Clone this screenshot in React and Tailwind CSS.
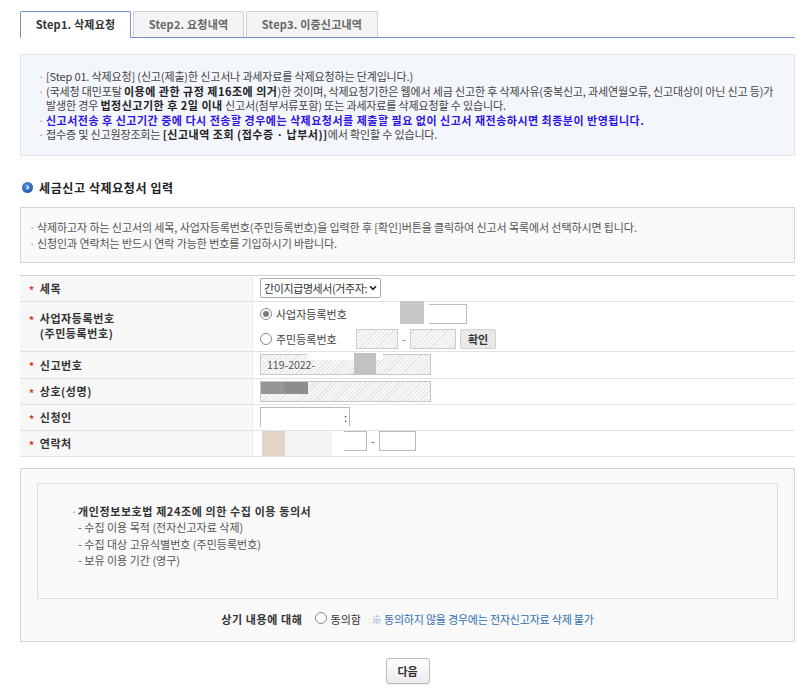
import React from 'react';

const Star = () => <span className="text-[#d32f2f] text-[10px] mr-[5px] relative top-[1px]">*</span>;

const Radio = ({ checked }) => (
  <span className="inline-flex items-center justify-center w-[12px] h-[12px] rounded-full border border-[#8a8a8a] bg-white mr-[4px]">
    {checked && <span className="w-[6px] h-[6px] rounded-full bg-[#7a7a7a]" />}
  </span>
);

const Row = ({ label, h, children }) => (
  <div className="flex border-b border-[#e2e2e2]" style={{ height: h }}>
    <div className="w-[233px] bg-[#f7f7f7] flex items-center pl-[9px] font-bold text-[11px] text-[#333] tracking-[0.6px] border-r border-[#ececec]">
      {label}
    </div>
    <div className="flex-1 relative flex items-center pl-[7px]">{children}</div>
  </div>
);

export default function App() {
  return (
    <div className="min-h-screen bg-white font-['Noto_Sans_CJK_KR',sans-serif] text-[#444] text-[11px]">
      <div className="w-[775px] ml-[20px] pt-[11px] pb-[12px]">
        {/* tabs */}
        <div className="flex items-end gap-[2px] border-b border-[#6f91c7] h-[27px]">
          <div className="w-[111px] h-[27px] -mb-px bg-white border border-[#6f91c7] border-b-white rounded-t-[2px] flex items-center justify-center font-bold text-[11px] text-[#333] tracking-[0.2px]">
            Step1. 삭제요청
          </div>
          <div className="w-[111px] h-[26px] bg-[#f4f4f4] border border-[#cfcfcf] border-b-0 rounded-t-[2px] flex items-center justify-center font-bold text-[11px] text-[#666] tracking-[0.2px]">
            Step2. 요청내역
          </div>
          <div className="w-[132px] h-[26px] bg-[#f4f4f4] border border-[#cfcfcf] border-b-0 rounded-t-[2px] flex items-center justify-center font-bold text-[11px] text-[#666] tracking-[0.2px]">
            Step3. 이중신고내역
          </div>
        </div>

        {/* info box */}
        <div className="mt-[16px] bg-[#f3f6fb] border border-[#e1e5eb] pt-[14px] pb-[13px] pl-[17px] text-[11px] leading-[14.6px] tracking-[-0.15px] text-[#444]">
          <div className="flex"><span className="w-[8px] text-[#999]">·</span><span>[Step 01. 삭제요청] (신고(제출)한 신고서나 과세자료를 삭제요청하는 단계입니다.)</span></div>
          <div className="flex">
            <span className="w-[8px] text-[#999]">·</span>
            <span>
              (국세청 대민포탈 <b className="text-[#222] tracking-[0.5px]">이용에 관한 규정 제16조에 의거</b>)한 것이며, 삭제요청기한은 웹에서 세금 신고한 후 삭제사유(중복신고, 과세연월오류, 신고대상이 아닌 신고 등)가
              <br />
              발생한 경우 <b className="text-[#222] tracking-[0.5px]">법정신고기한 후 2일 이내</b> 신고서(첨부서류포함) 또는 과세자료를 삭제요청할 수 있습니다.
            </span>
          </div>
          <div className="flex"><span className="w-[8px] text-[#999]">·</span><b className="text-[#2d14e6] tracking-[0.5px]">신고서전송 후 신고기간 중에 다시 전송할 경우에는 삭제요청서를 제출할 필요 없이 신고서 재전송하시면 최종분이 반영됩니다.</b></div>
          <div className="flex"><span className="w-[8px] text-[#999]">·</span><span>접수증 및 신고원장조회는 <b className="text-[#222] tracking-[0.5px]">[신고내역 조회 (접수증 · 납부서)]</b>에서 확인할 수 있습니다.</span></div>
        </div>

        {/* heading */}
        <div className="mt-[23px] flex items-center gap-[6px] pl-[2px]">
          <svg width="11" height="11" viewBox="0 0 11 11">
            <defs>
              <radialGradient id="g" cx="40%" cy="35%" r="70%">
                <stop offset="0%" stopColor="#4f8fdc" />
                <stop offset="100%" stopColor="#1d5aa8" />
              </radialGradient>
            </defs>
            <circle cx="5.5" cy="5.5" r="5.5" fill="url(#g)" />
            <path d="M4.6 3.6 L6.6 5.5 L4.6 7.4" stroke="#fff" strokeWidth="1.3" fill="none" />
          </svg>
          <span className="font-bold text-[12px] text-[#222] tracking-[0.6px]">세금신고 삭제요청서 입력</span>
        </div>

        {/* guide box */}
        <div className="mt-[10px] bg-[#f9f9f9] border border-[#d6d6d6] py-[11px] pl-[8px] text-[11px] leading-[16px] tracking-[-0.1px] text-[#555]">
          <div className="flex"><span className="w-[8px] text-[#999]">·</span><span>삭제하고자 하는 신고서의 세목, 사업자등록번호(주민등록번호)을 입력한 후 [확인]버튼을 클릭하여 신고서 목록에서 선택하시면 됩니다.</span></div>
          <div className="flex"><span className="w-[8px] text-[#999]">·</span><span>신청인과 연락처는 반드시 연락 가능한 번호를 기입하시기 바랍니다.</span></div>
        </div>

        {/* form table */}
        <div className="mt-[12px] border-t border-[#d4d4d4]">
          <Row h={26} label={<><Star />세목</>}>
            <div className="w-[121px] h-[20px] border border-[#a9a9a9] rounded-[2px] flex items-center justify-between pl-[3px] pr-[3px] text-[11px] text-[#333] tracking-[-0.4px]">
              <span>간이지급명세서(거주자:</span>
              <svg width="8" height="6" viewBox="0 0 8 6"><path d="M1 1.2 L4 4.4 L7 1.2" stroke="#222" strokeWidth="1.6" fill="none" /></svg>
            </div>
          </Row>
          <Row h={50} label={<div className="flex"><Star /><div className="leading-[15px]">사업자등록번호<br />(주민등록번호)</div></div>}>
            <div className="flex flex-col gap-[5px]">
              <div className="flex items-center h-[20px] text-[11px] text-[#444]">
                <Radio checked />
                <span className="w-[124px]">사업자등록번호</span>
                <div className="w-[24px] h-[23px] -mt-[3px] bg-[#c7c7c7]" />
                <div className="w-[38px] h-[20px] ml-[5px] border-t border-r border-b border-[#bbb]" />
              </div>
              <div className="flex items-center h-[20px] text-[11px] text-[#444]">
                <Radio />
                <span className="w-[80px]">주민등록번호</span>
                <div className="w-[42px] h-[20px] border border-[#ccc] bg-[repeating-linear-gradient(135deg,#f7f7f7_0px,#f7f7f7_2px,#e4e4e4_2px,#e4e4e4_3px)]" />
                <span className="w-[12px] text-center text-[#666]">-</span>
                <div className="w-[46px] h-[20px] border border-[#ccc] bg-[repeating-linear-gradient(135deg,#f7f7f7_0px,#f7f7f7_2px,#e4e4e4_2px,#e4e4e4_3px)]" />
                <div className="ml-[4px] w-[36px] h-[20px] bg-[#e9e9e9] border border-[#d2d2d2] rounded-[2px] flex items-center justify-center font-bold text-[11px] text-[#333]">확인</div>
              </div>
            </div>
          </Row>
          <Row h={27} label={<><Star />신고번호</>}>
            <div className="relative w-[171px] h-[21px] border border-[#c8c8c8] bg-[repeating-linear-gradient(135deg,#f7f7f7_0px,#f7f7f7_2px,#e4e4e4_2px,#e4e4e4_3px)] flex items-center pl-[6px] text-[10.5px] text-[#555]">
              119-2022-
              <div className="absolute left-[46px] -top-[1px] w-[76px] h-[6px] bg-white" />
              <div className="absolute left-[93px] -top-[2px] w-[22px] h-[21px] bg-[#c2c2c2]" />
            </div>
          </Row>
          <Row h={26} label={<><Star />상호(성명)</>}>
            <div className="relative w-[171px] h-[21px] border border-[#c8c8c8] bg-[repeating-linear-gradient(135deg,#f7f7f7_0px,#f7f7f7_2px,#e4e4e4_2px,#e4e4e4_3px)]">
              <div className="absolute left-0 top-0 w-[47px] h-[12px] bg-[#8d8d8d]" />
              <div className="absolute left-0 top-0 w-[23px] h-[12px] bg-[#969696]" />
            </div>
          </Row>
          <Row h={26} label={<><Star />신청인</>}>
            <div className="w-[90px] h-[20px] border border-[#bbb] border-b-white flex items-center justify-end pr-[2px] text-[11px] text-[#333]">:</div>
          </Row>
          <Row h={26} label={<><Star />연락처</>}>
            <div className="flex items-center h-full">
              <div className="w-[23px] h-full ml-[2px] bg-[#e3d5c5]" />
              <div className="w-[47px] h-full bg-[#f4f4f4]" />
              <div className="w-[12px] h-full bg-white" />
              <div className="w-[23px] h-[20px] -mt-[4px] border-t border-r border-b border-[#bbb]" />
              <span className="w-[12px] text-center text-[#666] -mt-[4px]">-</span>
              <div className="w-[37px] h-[20px] -mt-[4px] border border-[#bbb]" />
            </div>
          </Row>
        </div>

        {/* consent */}
        <div className="mt-[11px] bg-[#f9f9f9] border border-[#d6d6d6] pt-[14px] pb-[14px] px-[16px]">
          <div className="h-[116px] border border-[#dddddd] pt-[19px] pl-[33px] text-[11px] leading-[16.3px] tracking-[0px] text-[#555]">
            <div className="flex"><span className="w-[7px] text-[#999]">·</span><b className="text-[#333] tracking-[0.6px]">개인정보보호법 제24조에 의한 수집 이용 동의서</b></div>
            <div className="pl-[7px]">- 수집 이용 목적 (전자신고자료 삭제)</div>
            <div className="pl-[7px]">- 수집 대상 고유식별번호 (주민등록번호)</div>
            <div className="pl-[7px]">- 보유 이용 기간 (영구)</div>
          </div>
          <div className="mt-[12px] flex items-center justify-center text-[11px] h-[16px]">
            <b className="text-[#333] tracking-[0.6px]">상기 내용에 대해</b>
            <span className="ml-[12px]"><Radio /></span>
            <span className="text-[#333]">동의함</span>
            <span className="ml-[10px] text-[#2f6fb1] tracking-[-0.2px]"><span className="text-[#8aa6c8]">※</span> 동의하지 않을 경우에는 전자신고자료 삭제 불가</span>
          </div>
        </div>

        <div className="mt-[16px] flex justify-center">
          <div className="w-[44px] h-[26px] border border-[#bcbcbc] rounded-[3px] bg-gradient-to-b from-white to-[#ececec] shadow-[0_1px_1px_rgba(0,0,0,0.08)] flex items-center justify-center font-bold text-[11px] text-[#333]">다음</div>
        </div>
      </div>
    </div>
  );
}
